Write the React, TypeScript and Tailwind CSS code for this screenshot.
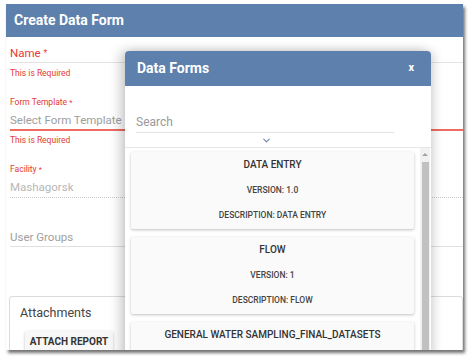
import { ChevronDown } from 'lucide-react'

// ── Data ─────────────────────────────────────────────────────────────────────

interface FormItem {
  name: string
  version?: string
  description?: string
}

const FORMS: FormItem[] = [
  { name: 'DATA ENTRY', version: '1.0', description: 'DATA ENTRY' },
  { name: 'FLOW', version: '1', description: 'FLOW' },
  { name: 'GENERAL WATER SAMPLING_FINAL_DATASETS', version: '2', description: 'WATER' },
]

// ── Form card ────────────────────────────────────────────────────────────────

function FormCard({ item }: { item: FormItem }) {
  return (
    <div className="flex h-[77px] shrink-0 flex-col items-center rounded-[2px] bg-[#fafafa] pt-[7px] shadow-[0_1px_3px_rgba(0,0,0,0.25)]">
      <p className="text-[10px] font-medium leading-[12px] text-[#333]">{item.name}</p>
      <p className="mt-[14px] text-[8.5px] font-medium leading-[10px] text-[#444]">
        VERSION: {item.version}
      </p>
      <p className="mt-[15px] text-[8.5px] font-medium leading-[10px] text-[#444]">
        DESCRIPTION: {item.description}
      </p>
    </div>
  )
}

// ── Main ─────────────────────────────────────────────────────────────────────

export default function App() {
  return (
    <div
      className="h-[361px] w-[474px] bg-white pl-[6px] pt-[4px]"
      style={{ fontFamily: 'Roboto, "Liberation Sans", sans-serif' }}
    >
      {/* outer window */}
      <div className="relative flex h-[346px] w-[457px] flex-col overflow-hidden bg-white shadow-[2px_3px_3px_rgba(0,0,0,0.55)]">
        <div className="flex h-[33px] shrink-0 items-center bg-[#5d80ad] px-[8px]">
          <h1 className="text-[14px] font-bold text-white">Create Data Form</h1>
        </div>

        <div className="flex flex-col pl-[4px]">
          {/* Name */}
          <p className="mt-[8px] text-[11.5px] leading-[16px] text-[#e53935]">
            Name <span className="align-top text-[8.5px]">*</span>
          </p>
          <div className="mt-px h-px bg-[#e4e4e4]" />
          <p className="mt-[4.5px] text-[8.5px] leading-[11px] text-[#e53935]">This is Required</p>

          {/* Form template */}
          <p className="mt-[17.5px] text-[8.5px] leading-[12px] text-[#e53935]">
            Form Template <span className="text-[7.5px]">*</span>
          </p>
          <p className="mt-[3.5px] text-[11.5px] leading-[15px] text-[#9e9e9e]">Select Form Template</p>
          <div className="mt-[1.5px] h-[1.5px] bg-[#ef6a5f]" />
          <p className="mt-[4px] text-[8.5px] leading-[11px] text-[#e53935]">This is Required</p>

          {/* Facility */}
          <p className="mt-[17.5px] text-[8.5px] leading-[12px] text-[#e53935]">
            Facility <span className="text-[7.5px]">*</span>
          </p>
          <p className="mt-[3.5px] text-[11.5px] leading-[15px] text-[#b7b7b7]">Mashagorsk</p>
          <div className="mt-[2.5px] border-b border-dotted border-[#c8c8c8]" />

          {/* User groups */}
          <p className="mt-[31.5px] text-[11.5px] leading-[15px] text-[#9e9e9e]">User Groups</p>
          <div className="mt-px h-px bg-[#e0e0e0]" />

          {/* Attachments */}
          <div className="ml-[-1px] mt-[49px] flex flex-col rounded-[3px] border border-[#dcdcdc] px-[10px] pb-[4px] pt-[7px]">
            <p className="text-[12.5px] leading-[17px] text-[#444]">Attachments</p>
            <button className="ml-[5px] mt-[10px] w-[88px] rounded-[2px] bg-[#f7f7f7] py-[4px] text-[10px] font-bold leading-[14px] text-[#333] shadow-[0_1px_3px_rgba(0,0,0,0.25)]">
              ATTACH REPORT
            </button>
          </div>
        </div>

        {/* Data Forms dialog */}
        <div className="absolute left-[119px] top-[47px] flex h-[310px] w-[306px] flex-col rounded-t-[4px] bg-white shadow-[-5px_0_12px_rgba(0,0,0,0.2),4px_0_10px_rgba(0,0,0,0.12)]">
          <div className="flex h-[35px] shrink-0 items-center justify-between rounded-t-[4px] bg-[#5d80ad] pl-[12px] pr-[17px]">
            <h2 className="text-[14px] font-bold text-white">Data Forms</h2>
            <span className="text-[11px] font-bold text-white">x</span>
          </div>

          <div className="flex h-[62px] shrink-0 flex-col border-b border-[#e6e6e6] px-[11px] pt-[29px]">
            <p className="text-[12px] leading-[15px] text-[#9a9a9a]">Search</p>
            <div className="mr-[26px] mt-[2px] h-px bg-[#e2e2e2]" />
            <div className="mt-[2px] flex justify-center pr-[24px]">
              <ChevronDown className="h-[11px] w-[11px] text-[#6f86a8]" strokeWidth={2.5} />
            </div>
          </div>

          <div className="flex min-h-0 flex-1">
            <div className="flex flex-1 flex-col gap-[8px] pl-[6px] pr-[6px] pt-[4px]">
              {FORMS.map((f) => (
                <FormCard key={f.name} item={f} />
              ))}
            </div>
            <div className="mr-[1px] flex w-[10px] flex-col items-center bg-[#f1f1f1] pt-[5px]">
              <div className="h-0 w-0 border-x-[3px] border-b-[3px] border-x-transparent border-b-[#a3a3a3]" />
              <div className="mt-[6px] w-[7px] flex-1 bg-[#c1c1c1]" />
            </div>
          </div>
        </div>
      </div>
    </div>
  )
}
